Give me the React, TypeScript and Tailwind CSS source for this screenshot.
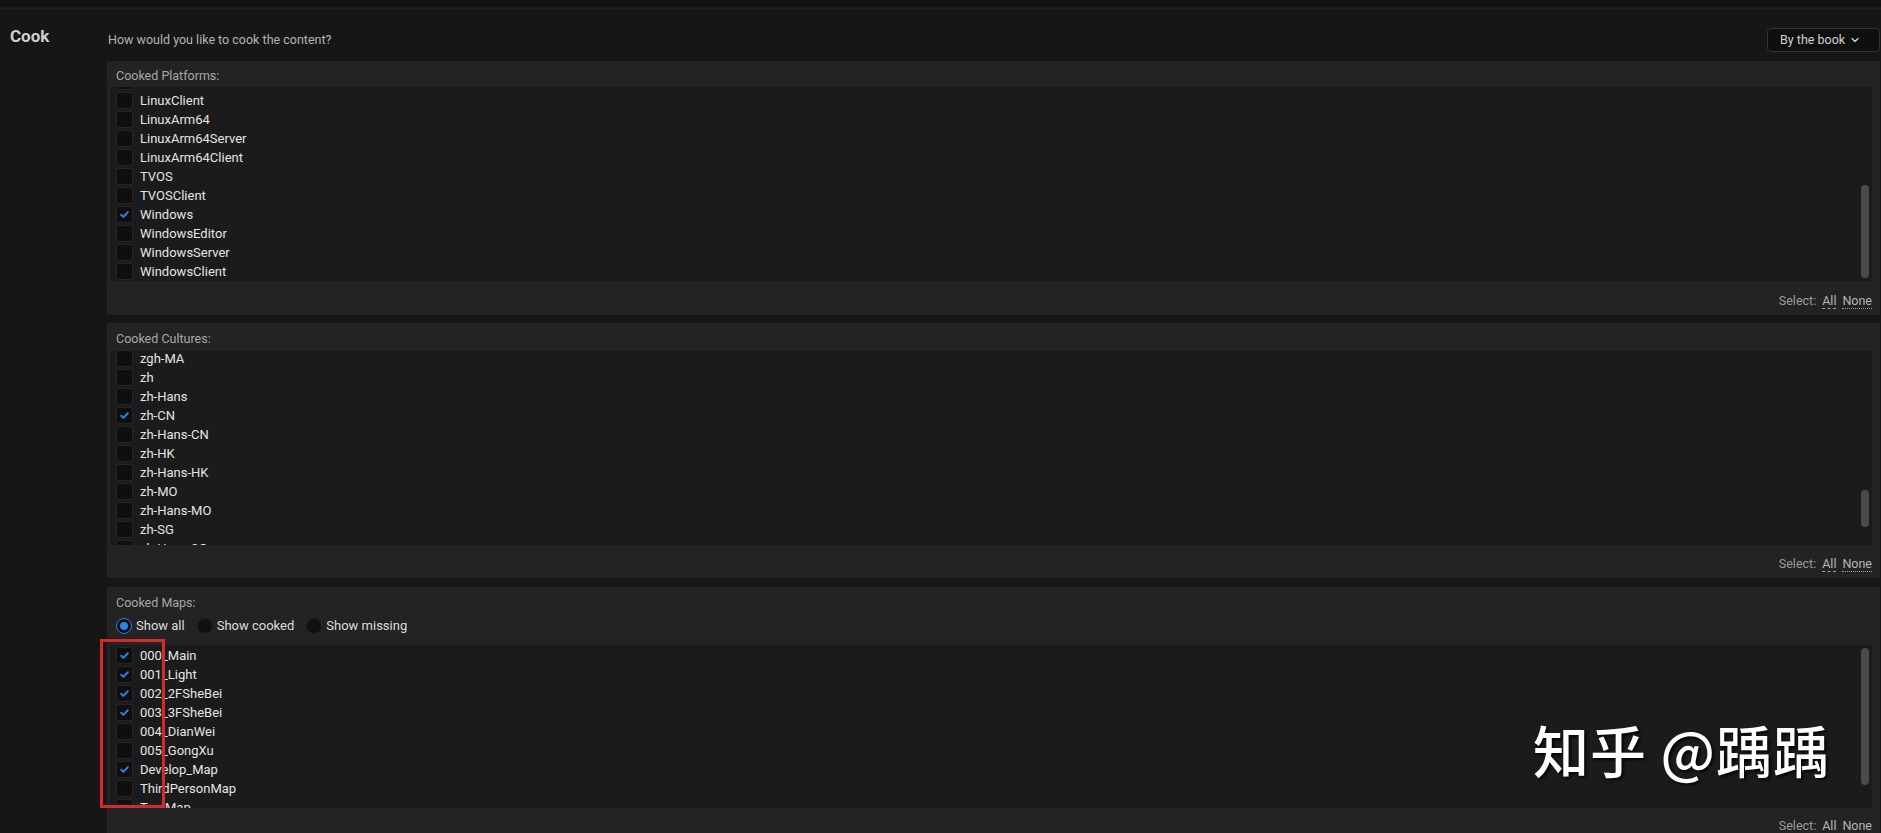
import React from "react";

type Item = { label: string; checked?: boolean };

const platforms: Item[] = [
  { label: "LinuxServer" },
  { label: "LinuxClient" },
  { label: "LinuxArm64" },
  { label: "LinuxArm64Server" },
  { label: "LinuxArm64Client" },
  { label: "TVOS" },
  { label: "TVOSClient" },
  { label: "Windows", checked: true },
  { label: "WindowsEditor" },
  { label: "WindowsServer" },
  { label: "WindowsClient" },
];

const cultures: Item[] = [
  { label: "zgh" },
  { label: "zgh-MA" },
  { label: "zh" },
  { label: "zh-Hans" },
  { label: "zh-CN", checked: true },
  { label: "zh-Hans-CN" },
  { label: "zh-HK" },
  { label: "zh-Hans-HK" },
  { label: "zh-MO" },
  { label: "zh-Hans-MO" },
  { label: "zh-SG" },
  { label: "zh-Hans-SG" },
];

const maps: Item[] = [
  { label: "000_Main", checked: true },
  { label: "001_Light", checked: true },
  { label: "002_2FSheBei", checked: true },
  { label: "003_3FSheBei", checked: true },
  { label: "004_DianWei" },
  { label: "005_GongXu" },
  { label: "Develop_Map", checked: true },
  { label: "ThirdPersonMap" },
  { label: "TestMap" },
];

function CheckBox({ checked }: { checked?: boolean }) {
  return (
    <div className="w-[17px] h-[17px] shrink-0 rounded-[2px] bg-[#0f0f0f] border border-[#262626] flex items-center justify-center">
      {checked && (
        <svg width="11" height="11" viewBox="0 0 12 12" fill="none">
          <path
            d="M2.4 6.3l2.4 2.3 4.8-5"
            stroke="#2f7fe6"
            strokeWidth="2.2"
            strokeLinecap="round"
            strokeLinejoin="round"
          />
        </svg>
      )}
    </div>
  );
}

function Radio({ on, label }: { on?: boolean; label: string }) {
  return (
    <div className="flex items-center gap-[4px]">
      <div
        className={
          on
            ? "w-[16px] h-[16px] rounded-full border-[1.5px] border-[#2f7fe6] bg-[#0f0f0f] flex items-center justify-center"
            : "w-[16px] h-[16px] rounded-full bg-[#111111] border border-[#1f1f1f]"
        }
      >
        {on && <div className="w-[8px] h-[8px] rounded-full bg-[#2f7fe6]" />}
      </div>
      <span className="text-[13px] text-[#dcdcdc]">{label}</span>
    </div>
  );
}

function List({
  items,
  height,
  offset,
  thumbTop,
  thumbHeight,
}: {
  items: Item[];
  height: string;
  offset: string;
  thumbTop: string;
  thumbHeight: string;
}) {
  return (
    <div className={`flex ml-[3px] mr-[8px] bg-[#1b1b1b] overflow-hidden ${height}`}>
      <div className={`flex-1 pl-[6px] ${offset}`}>
        {items.map((it) => (
          <div key={it.label} className="h-[19px] flex items-center gap-[7px]">
            <CheckBox checked={it.checked} />
            <span className="text-[13px] text-[#e4e4e4] leading-none">{it.label}</span>
          </div>
        ))}
      </div>
      <div className="w-[8px] mr-[3px]">
        <div className={`w-[8px] rounded-full bg-[#4b4b4b] ${thumbTop} ${thumbHeight}`} />
      </div>
    </div>
  );
}

function Footer({ pad }: { pad: string }) {
  return (
    <div className={`flex justify-end items-center gap-[6px] pr-[8px] text-[12.5px] leading-[16px] ${pad}`}>
      <span className="text-[#9c9c9c]">Select:</span>
      <span className="text-[#b4b4b4] border-b border-dashed border-[#9c9c9c] leading-[14px]">All</span>
      <span className="text-[#b4b4b4] border-b border-dotted border-[#9c9c9c] leading-[14px]">None</span>
    </div>
  );
}

export default function App() {
  return (
    <div className="relative h-[833px] w-full overflow-hidden bg-[#161616] font-['Roboto','Liberation_Sans',sans-serif]">
      <div className="h-[9px] bg-[#131313] border-b-2 border-[#1c1c1c]" />
      <div className="flex">
        <div className="w-[107px] shrink-0 pl-[10px] pt-[16px]">
          <span className="text-[17px] leading-[20px] font-bold text-[#cfcfcf]">Cook</span>
        </div>
        <div className="flex-1 pr-[1px]">
          <div className="flex items-center justify-between h-[24px] mt-[19px] mb-[9px]">
            <span className="pl-[1px] text-[12.5px] text-[#b4b4b4]">How would you like to cook the content?</span>
            <div className="h-[24px] w-[113px] flex items-center gap-[5px] pl-[12px] rounded-[4px] border border-[#323232] bg-[#0f0f0f]">
              <span className="text-[12.5px] text-[#d2d2d2]">By the book</span>
              <svg width="10" height="10" viewBox="0 0 10 10" fill="none">
                <path d="M2 3.5l3 3 3-3" stroke="#d2d2d2" strokeWidth="1.3" strokeLinecap="round" strokeLinejoin="round" />
              </svg>
            </div>
          </div>

          <div className="bg-[#232323]">
            <div className="h-[26px] pt-[7px] pl-[9px] text-[12.5px] leading-[16px] text-[#a8a8a8]">Cooked Platforms:</div>
            <List items={platforms} height="h-[195px]" offset="-mt-[15px]" thumbTop="mt-[98px]" thumbHeight="h-[93px]" />
            <Footer pad="pt-[11px] pb-[6px]" />
          </div>

          <div className="bg-[#232323] mt-[8px]">
            <div className="h-[27px] pt-[8px] pl-[9px] text-[12.5px] leading-[16px] text-[#a8a8a8]">Cooked Cultures:</div>
            <List items={cultures} height="h-[195px]" offset="-mt-[20px]" thumbTop="mt-[140px]" thumbHeight="h-[37px]" />
            <Footer pad="pt-[11px] pb-[6px]" />
          </div>

          <div className="bg-[#232323] mt-[9px]">
            <div className="pt-[8px] pl-[9px] text-[12.5px] leading-[16px] text-[#a8a8a8]">Cooked Maps:</div>
            <div className="flex items-center gap-[12px] h-[20px] mt-[5px] pl-[9px]">
              <Radio on label="Show all" />
              <Radio label="Show cooked" />
              <Radio label="Show missing" />
            </div>
            <div className="mt-[9px]">
              <List items={maps} height="h-[163px]" offset="mt-[1px]" thumbTop="mt-[3px]" thumbHeight="h-[137px]" />
            </div>
            <Footer pad="pt-[10px] pb-[6px]" />
          </div>
        </div>
      </div>

      <div className="absolute left-[100px] top-[639px] w-[65px] h-[169px] border-[3px] border-[#d32a2a]" />

      <div className="absolute left-[1533px] top-[721px] text-[56px] leading-none tracking-[1px] font-medium text-white font-['Noto_Sans_CJK_SC',sans-serif] [text-shadow:2px_2px_3px_rgba(0,0,0,0.85)]">
        知乎 @踽踽
      </div>
    </div>
  );
}
